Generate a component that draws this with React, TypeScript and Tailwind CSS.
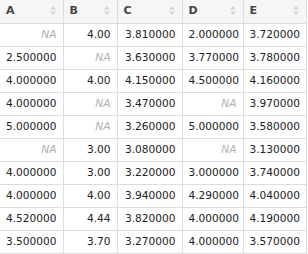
const columns = [
  { name: "A", width: "w-[63px]" },
  { name: "B", width: "w-[54px]" },
  { name: "C", width: "w-[65px]" },
  { name: "D", width: "w-[61px]" },
  { name: "E", width: "w-[63px]" },
];

const rows: (string | null)[][] = [
  [null, "4.00", "3.810000", "2.000000", "3.720000"],
  ["2.500000", null, "3.630000", "3.770000", "3.780000"],
  ["4.000000", "4.00", "4.150000", "4.500000", "4.160000"],
  ["4.000000", null, "3.470000", null, "3.970000"],
  ["5.000000", null, "3.260000", "5.000000", "3.580000"],
  [null, "3.00", "3.080000", null, "3.130000"],
  ["4.000000", "3.00", "3.220000", "3.000000", "3.740000"],
  ["4.000000", "4.00", "3.940000", "4.290000", "4.040000"],
  ["4.520000", "4.44", "3.820000", "4.000000", "4.190000"],
  ["3.500000", "3.70", "3.270000", "4.000000", "3.570000"],
];

const SortIcon = () => (
  <svg width="6" height="9" viewBox="0 0 6 9" className="absolute right-[7px] top-[6px]">
    <path d="M3 0 L6 3.5 L0 3.5 Z" fill="#d4d4d4" />
    <path d="M3 9 L6 5.5 L0 5.5 Z" fill="#d4d4d4" />
  </svg>
);

export default function App() {
  return (
    <div className="w-[308px] h-[254px] bg-white overflow-hidden font-['DejaVu_Sans',sans-serif] text-[10.6px] text-[#222]">
      <table className="table-fixed border-collapse w-[306px]">
        <thead>
          <tr className="h-[23px] bg-[#f6f6f6]">
            {columns.map((c) => (
              <th
                key={c.name}
                className={`${c.width} relative text-left font-bold text-[11px] text-[#444] pl-[6px] border-r border-b border-[#dddddd] last:border-r`}
              >
                {c.name}
                <SortIcon />
              </th>
            ))}
          </tr>
        </thead>
        <tbody>
          {rows.map((row, i) => (
            <tr key={i} className="h-[23px]">
              {row.map((v, j) => (
                <td
                  key={j}
                  className="text-right px-[6px] border-r border-b border-[#dddddd] whitespace-nowrap"
                >
                  {v === null ? (
                    <span className="italic text-[#b0b0b0]">NA</span>
                  ) : (
                    v
                  )}
                </td>
              ))}
            </tr>
          ))}
        </tbody>
      </table>
    </div>
  );
}
